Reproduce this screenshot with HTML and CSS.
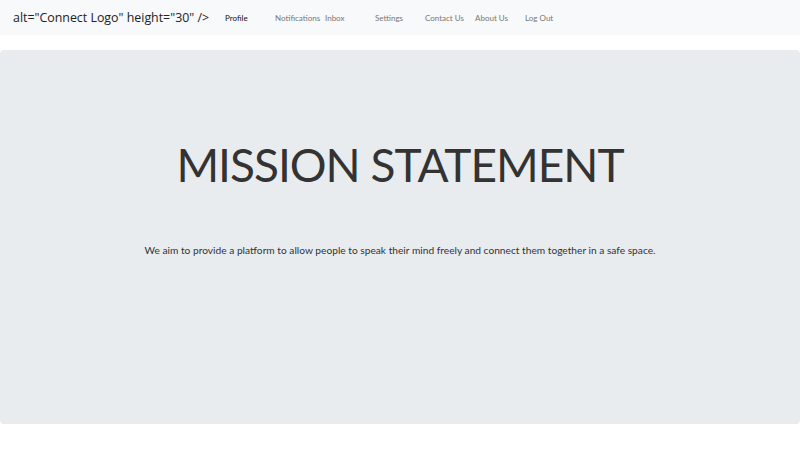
FILE: index.html
```html
<!DOCTYPE html>
<html lang="en">
<head>
    <meta charset="UTF-8">
    <meta name="viewport" content="width=device-width, initial-scale=1.0">
    <title>Connect - Mission</title>
    <link rel="stylesheet" href="styles.css">
</head>
<body>
    <nav class="navbar">
        <span class="brand">alt="Connect Logo" height="30" /&gt;</span>
        <ul class="nav-links">
            <li><a href="#" class="active">Profile</a></li>
            <li><a href="#">Notifications</a></li>
            <li><a href="#">Inbox</a></li>
            <li><a href="#">Settings</a></li>
            <li><a href="#">Contact Us</a></li>
            <li><a href="#">About Us</a></li>
            <li><a href="#">Log Out</a></li>
        </ul>
    </nav>

    <div class="jumbotron">
        <h1>MISSION STATEMENT</h1>
        <p>We aim to provide a platform to allow people to speak their mind freely and connect them together in a safe space.</p>
    </div>
</body>
</html>
```

FILE: styles.css
```css
* {
    box-sizing: border-box;
}

body {
    margin: 0;
    background: #fff;
    color: #333;
    font-family: "Open Sans", "Noto Sans", sans-serif;
}

.navbar {
    display: flex;
    align-items: center;
    height: 35px;
    background: #f8f9fa;
    padding-left: 13px;
}

.brand {
    font-size: 12.4px;
    color: #222;
    width: 212px;
}

.nav-links {
    display: flex;
    list-style: none;
    margin: 0 0 5px;
    padding: 0;
}

.nav-links li {
    width: 50px;
}

.nav-links a {
    font-family: Lato, sans-serif;
    font-size: 8px;
    color: #777;
    text-decoration: none;
}

.nav-links a.active {
    color: #111;
}

.jumbotron {
    margin-top: 15px;
    height: 374px;
    background: #e9ecef;
    border-radius: 4px;
    text-align: center;
    padding-top: 92px;
}

.jumbotron h1 {
    font-family: Lato, sans-serif;
    font-weight: 400;
    font-size: 46px;
    letter-spacing: -1px;
    color: #333;
    margin: 0 0 56px;
    line-height: 1;
}

.jumbotron p {
    font-family: Lato, sans-serif;
    font-size: 10.2px;
    color: #333;
    margin: 0;
}
```
